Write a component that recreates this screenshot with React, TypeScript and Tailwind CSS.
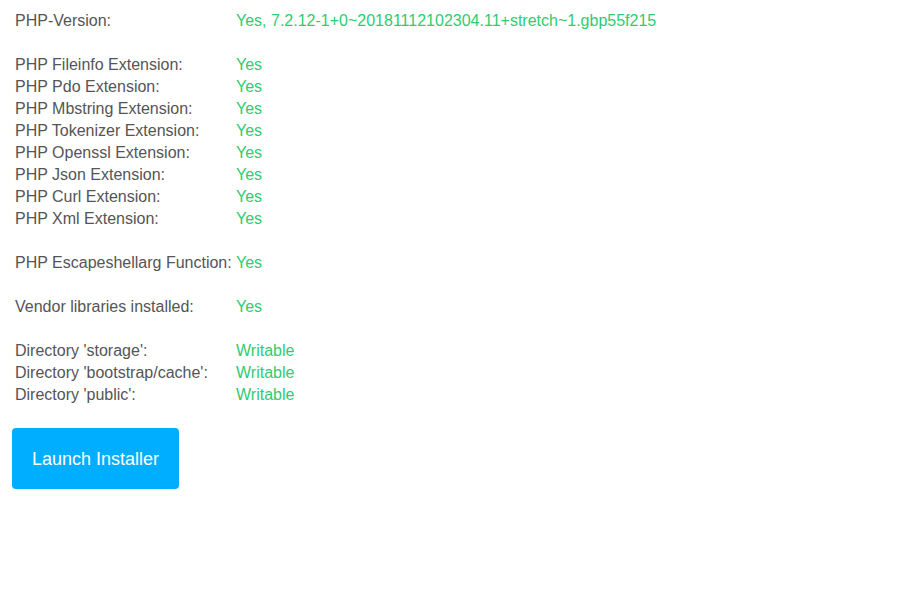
import React from 'react';

type Row = { label: string; value: string } | null;

const rows: Row[] = [
  { label: 'PHP-Version:', value: 'Yes, 7.2.12-1+0~20181112102304.11+stretch~1.gbp55f215' },
  null,
  { label: 'PHP Fileinfo Extension:', value: 'Yes' },
  { label: 'PHP Pdo Extension:', value: 'Yes' },
  { label: 'PHP Mbstring Extension:', value: 'Yes' },
  { label: 'PHP Tokenizer Extension:', value: 'Yes' },
  { label: 'PHP Openssl Extension:', value: 'Yes' },
  { label: 'PHP Json Extension:', value: 'Yes' },
  { label: 'PHP Curl Extension:', value: 'Yes' },
  { label: 'PHP Xml Extension:', value: 'Yes' },
  null,
  { label: 'PHP Escapeshellarg Function:', value: 'Yes' },
  null,
  { label: 'Vendor libraries installed:', value: 'Yes' },
  null,
  { label: "Directory 'storage':", value: 'Writable' },
  { label: "Directory 'bootstrap/cache':", value: 'Writable' },
  { label: "Directory 'public':", value: 'Writable' },
];

const App: React.FC = () => {
  return (
    <div className="min-h-screen bg-white pt-[10px] pl-[12px] font-['Liberation_Sans',Arial,sans-serif] text-[16px] leading-[22px] text-[#555555]">
      <div className="pl-[3px]">
        {rows.map((row, i) =>
          row ? (
            <div key={i} className="flex">
              <div className="w-[221px] shrink-0">{row.label}</div>
              <div className="text-[#2ecc71]">{row.value}</div>
            </div>
          ) : (
            <div key={i} className="h-[22px]" />
          )
        )}
      </div>
      <button className="mt-[22px] h-[61px] w-[167px] rounded-[4px] bg-[#00aeff] text-[18px] text-white">
        Launch Installer
      </button>
    </div>
  );
};

export default App;
